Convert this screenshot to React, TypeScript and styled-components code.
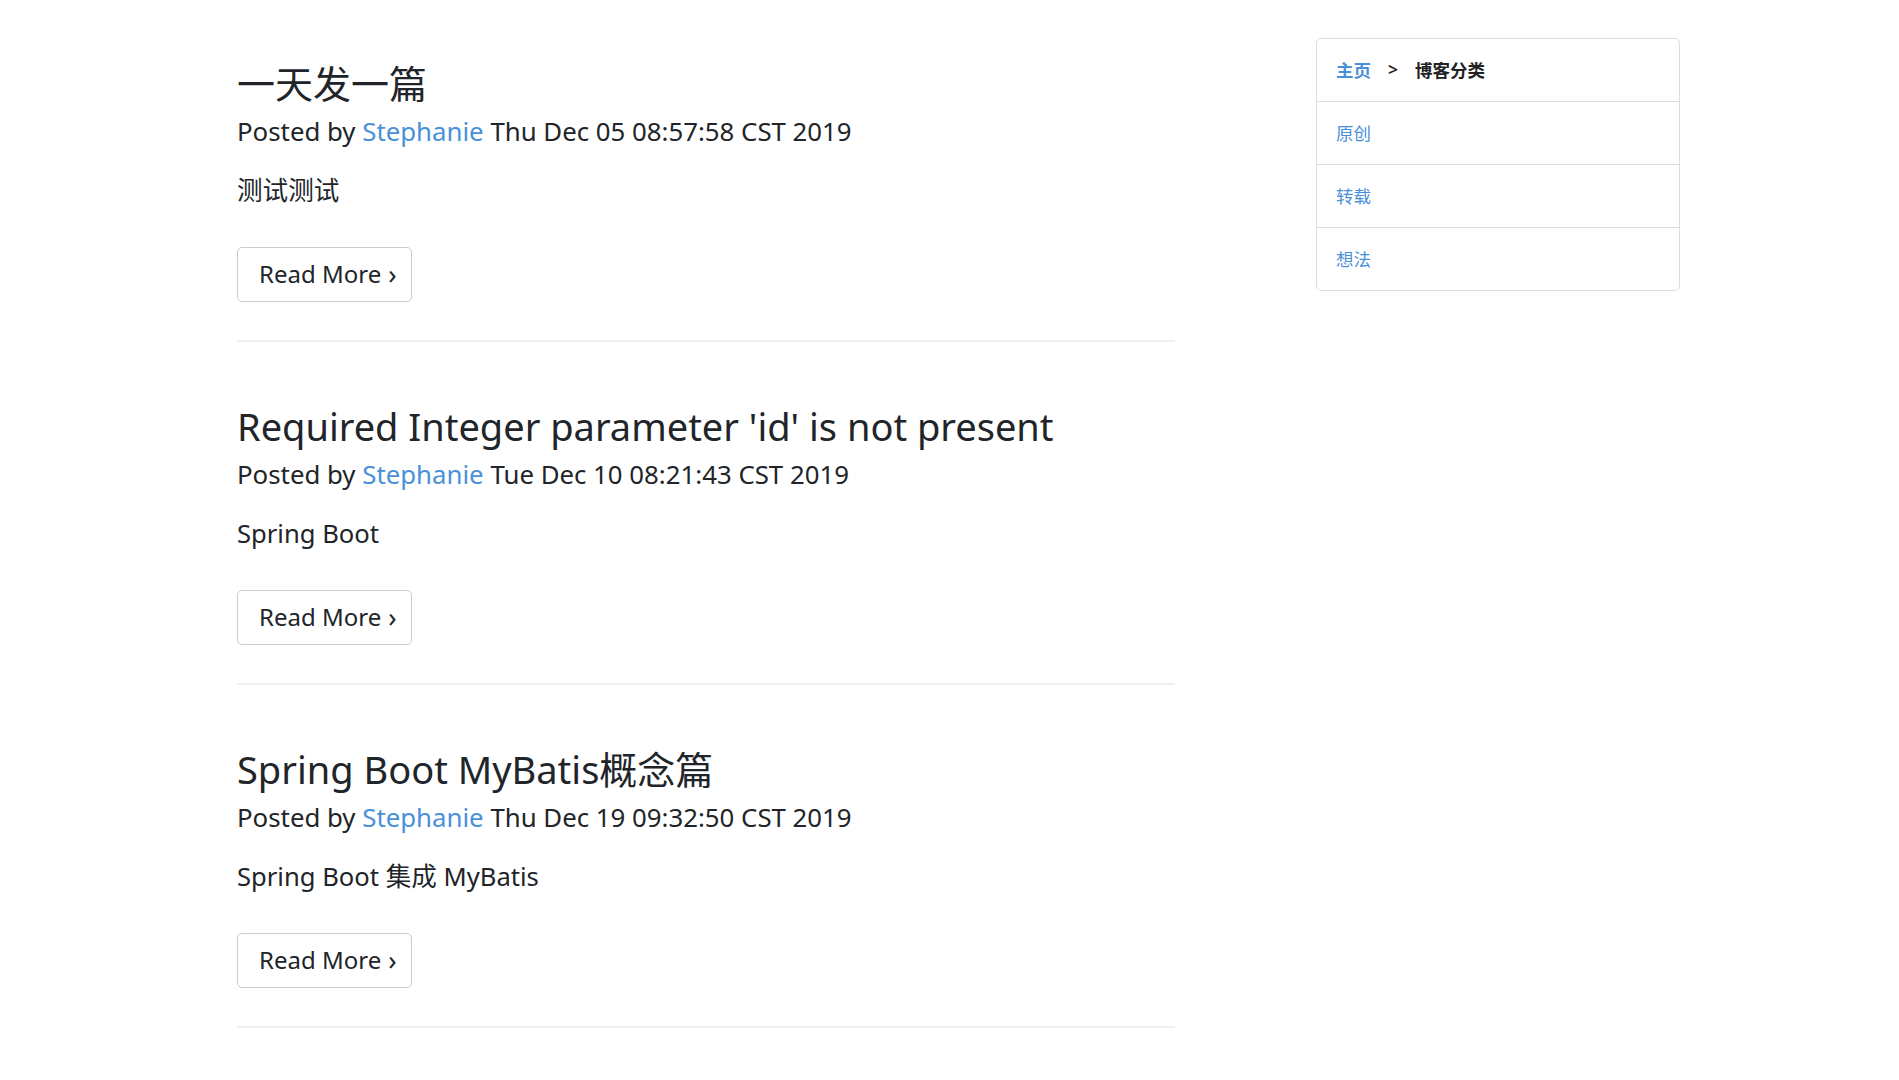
import React from "react";
import styled, { createGlobalStyle } from "styled-components";

const GlobalStyle = createGlobalStyle`
  html, body {
    margin: 0;
    padding: 0;
    background: #fff;
  }
  body {
    font-family: "Noto Sans", "Noto Sans CJK SC", sans-serif;
    color: #212529;
  }
`;

type Post = {
  title: string;
  author: string;
  date: string;
  summary: string;
};

const posts: Post[] = [
  {
    title: "一天发一篇",
    author: "Stephanie",
    date: "Thu Dec 05 08:57:58 CST 2019",
    summary: "测试测试",
  },
  {
    title: "Required Integer parameter 'id' is not present",
    author: "Stephanie",
    date: "Tue Dec 10 08:21:43 CST 2019",
    summary: "Spring Boot",
  },
  {
    title: "Spring Boot MyBatis概念篇",
    author: "Stephanie",
    date: "Thu Dec 19 09:32:50 CST 2019",
    summary: "Spring Boot 集成 MyBatis",
  },
];

const categories = ["原创", "转载", "想法"];

const Page = styled.div`
  display: flex;
  align-items: flex-start;
  padding: 0 0 0 237px;
`;

const Main = styled.main`
  width: 938px;
  padding-top: 61px;
`;

const Article = styled.article`
  display: flex;
  flex-direction: column;
  align-items: flex-start;
`;

const PostTitle = styled.h2`
  margin: 0;
  font-size: 38px;
  font-weight: 400;
  line-height: 44px;
  color: #212529;
`;

const PostMeta = styled.p`
  margin: 10px 0 0;
  font-size: 25.8px;
  line-height: 32px;
`;

const AuthorLink = styled.a`
  color: #4a90d9;
  text-decoration: none;
`;

const Summary = styled.p`
  margin: 28px 0 0;
  font-size: 25.6px;
  line-height: 32px;
`;

const ReadMore = styled.a`
  display: inline-flex;
  align-items: center;
  box-sizing: border-box;
  margin-top: 40px;
  height: 55px;
  width: 175px;
  padding: 0 0 2px 21px;
  border: 1px solid #ccc;
  border-radius: 5px;
  font-size: 24px;
  color: #212529;
  text-decoration: none;
  cursor: pointer;
`;

const Chevron = styled.span`
  margin-left: 7px;
  font-size: 27px;
  line-height: 1;
`;

const Divider = styled.hr`
  align-self: stretch;
  margin: 38px 0 62px;
  height: 2px;
  border: 0;
  background: #efefef;
`;

const Sidebar = styled.aside`
  margin: 38px 0 0 141px;
  width: 364px;
  box-sizing: border-box;
  border: 1px solid #ddd;
  border-radius: 5px;
  overflow: hidden;
`;

const SideItem = styled.div<{ $header?: boolean }>`
  display: flex;
  align-items: center;
  box-sizing: border-box;
  height: 63px;
  padding: 0 19px 2px;
  font-size: 17.5px;
  font-weight: ${(p) => (p.$header ? 700 : 400)};
  color: #4a90d9;
  border-bottom: 1px solid #ddd;

  &:last-child {
    height: 62px;
    border-bottom: 0;
  }
`;

const Crumb = styled.span<{ $current?: boolean }>`
  color: ${(p) => (p.$current ? "#222" : "#4a90d9")};
`;

const CrumbSep = styled.span`
  margin: 0 17px;
  color: #222;
  font-weight: 600;
`;

export default function App() {
  return (
    <>
      <GlobalStyle />
      <Page>
        <Main>
          {posts.map((post) => (
            <Article key={post.title}>
              <PostTitle>{post.title}</PostTitle>
              <PostMeta>
                Posted by <AuthorLink href="#">{post.author}</AuthorLink> {post.date}
              </PostMeta>
              <Summary>{post.summary}</Summary>
              <ReadMore href="#">
                Read More<Chevron>›</Chevron>
              </ReadMore>
              <Divider />
            </Article>
          ))}
        </Main>
        <Sidebar>
          <SideItem $header>
            <Crumb>主页</Crumb>
            <CrumbSep>&gt;</CrumbSep>
            <Crumb $current>博客分类</Crumb>
          </SideItem>
          {categories.map((c) => (
            <SideItem key={c}>{c}</SideItem>
          ))}
        </Sidebar>
      </Page>
    </>
  );
}
